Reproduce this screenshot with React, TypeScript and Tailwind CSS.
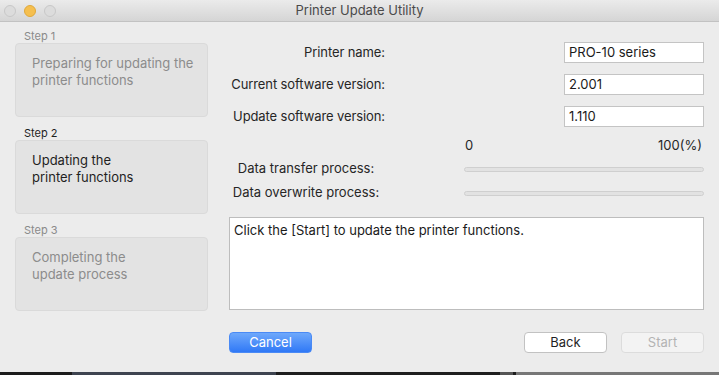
import type { ReactNode } from "react";

const font = { fontFamily: "Inter, 'Noto Sans', sans-serif" };

type Step = { label: string; lines: string[]; active?: boolean };

const steps: Step[] = [
    { label: "Step 1", lines: ["Preparing for updating the", "printer functions"] },
    { label: "Step 2", lines: ["Updating the", "printer functions"], active: true },
    { label: "Step 3", lines: ["Completing the", "update process"] },
];

function Field({ label, value }: { label: string; value: string }) {
    return (
        <div className="flex h-[21px] items-center">
            <div className="w-[156px] shrink-0 whitespace-nowrap text-right text-[13px] tracking-[-0.1px] text-[#262626]">
                {label}
            </div>
            <div className="ml-auto flex h-[21px] w-[140px] items-center border border-[#c4c4c4] bg-white px-[4px] text-[13px] text-[#1a1a1a]">
                {value}
            </div>
        </div>
    );
}

function Progress({ label }: { label: string }) {
    return (
        <div className="flex h-[16px] items-center">
            <div className="w-[154px] shrink-0 whitespace-nowrap text-center text-[13px] text-[#262626]">{label}</div>
            <div className="ml-auto h-[5px] w-[240px] rounded-full border border-[#cfcfcf] bg-[#e2e2e2]" />
        </div>
    );
}

function Button({ children, kind }: { children: ReactNode; kind: "primary" | "normal" | "disabled" }) {
    const cls =
        kind === "primary"
            ? "border-[#4a8af5] bg-gradient-to-b from-[#6ea8fb] to-[#2f78f6] text-white"
            : kind === "normal"
              ? "border-[#c2c2c2] bg-white text-[#1f1f1f]"
              : "border-[#dcdcdc] bg-[#f3f3f3] text-[#b3b3b3]";
    return (
        <div
            className={`flex h-[21px] w-[83px] items-center justify-center rounded-[4px] border text-[13px] ${cls}`}
        >
            {children}
        </div>
    );
}

export default function App() {
    return (
        <div className="flex h-[375px] w-[719px] flex-col overflow-hidden bg-[#ececec]" style={font}>
            {/* title bar */}
            <div className="relative flex h-[22px] shrink-0 items-center justify-center border-b border-[#c2c2c2] bg-gradient-to-b from-[#ebebeb] to-[#d5d5d5]">
                <div className="absolute left-[4px] top-[5px] flex gap-[8px]">
                    <span className="h-[12px] w-[12px] rounded-full border border-[#c8c8c8] bg-[#dcdcdc]" />
                    <span className="h-[12px] w-[12px] rounded-full border border-[#e0a93a] bg-[#f5bf4f]" />
                    <span className="h-[12px] w-[12px] rounded-full border border-[#c8c8c8] bg-[#dcdcdc]" />
                </div>
                <span className="text-[13px] text-[#4a4a4a]">Printer Update Utility</span>
            </div>

            <div className="flex flex-1 pl-[15px] pr-[15px]">
                {/* steps */}
                <div className="flex w-[193px] flex-col gap-[9px] pt-[7px]">
                    {steps.map((s) => (
                        <div key={s.label}>
                            <div
                                className={`h-[14px] pl-[9px] text-[11px] leading-[14px] ${s.active ? "text-[#1f1f1f]" : "text-[#8a8a8a]"}`}
                            >
                                {s.label}
                            </div>
                            <div
                                className={`h-[74px] rounded-[4px] border border-[#dadada] bg-[#e3e3e3] pl-[16px] pt-[11px] text-[13px] leading-[17px] ${s.active ? "text-[#1f1f1f]" : "text-[#8c8c8c]"}`}
                            >
                                {s.lines.map((l) => (
                                    <div key={l}>{l}</div>
                                ))}
                            </div>
                        </div>
                    ))}
                </div>

                {/* main */}
                <div className="ml-[21px] flex flex-1 flex-col pt-[20px]">
                    <div className="flex flex-col gap-[11px]">
                        <Field label="Printer name:" value="PRO-10 series" />
                        <Field label="Current software version:" value="2.001" />
                        <Field label="Update software version:" value="1.110" />
                    </div>
                    <div className="ml-auto mt-[10px] flex w-[240px] justify-between pl-[1px] pr-[2px] text-[13px] leading-[16px] text-[#262626]">
                        <span>0</span>
                        <span>100(%)</span>
                    </div>
                    <div className="mt-[8px] flex flex-col gap-[8px]">
                        <Progress label="Data transfer process:" />
                        <Progress label="Data overwrite process:" />
                    </div>
                    <div className="mt-[16px] h-[93px] border border-[#bdbdbd] bg-white px-[4px] pt-[4px] text-[13px] leading-[17px] text-[#1a1a1a]">
                        Click the [Start] to update the printer functions.
                    </div>
                    <div className="mt-[22px] flex items-center">
                        <Button kind="primary">Cancel</Button>
                        <div className="ml-auto flex gap-[14px]">
                            <Button kind="normal">Back</Button>
                            <Button kind="disabled">Start</Button>
                        </div>
                    </div>
                </div>
            </div>

            {/* desktop strip */}
            <div className="flex h-[3px] shrink-0">
                <div className="w-[72px] bg-[#1c1c1c]" />
                <div className="w-[204px] bg-[#3e4450]" />
                <div className="w-[224px] bg-[#1e1e1e]" />
                <div className="w-[13px] bg-[#555]" />
                <div className="w-[3px] bg-[#1e1e1e]" />
                <div className="flex-1 bg-[#777]" />
            </div>
        </div>
    );
}
